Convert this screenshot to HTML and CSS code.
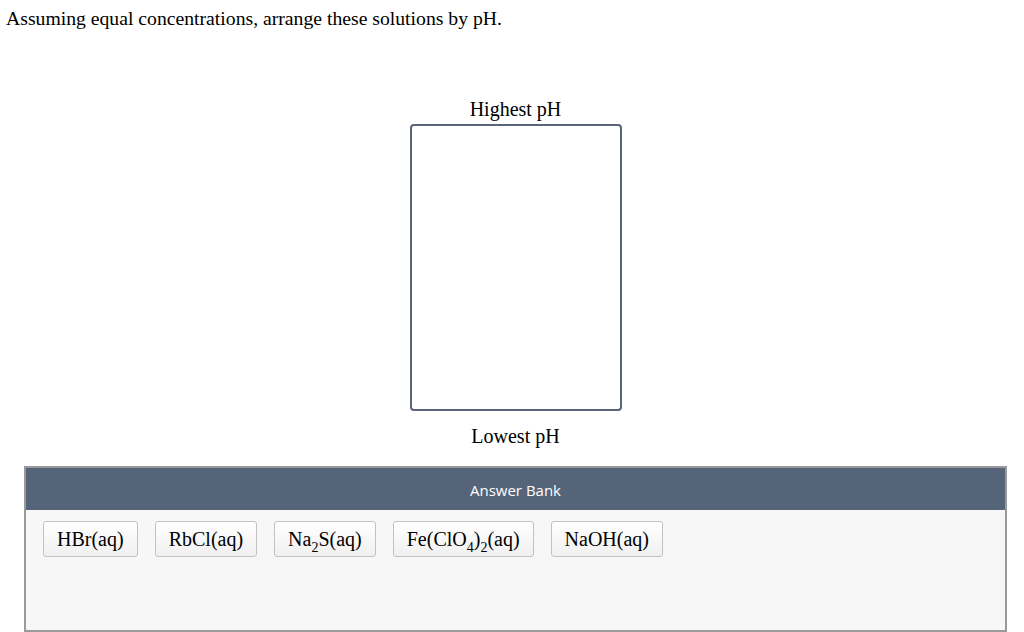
FILE: index.html
```html
<!DOCTYPE html>
<html lang="en">
<head>
    <meta charset="UTF-8">
    <title>Arrange by pH</title>
    <link rel="stylesheet" href="styles.css">
</head>
<body>

    <!-- Question -->
    <p class="question">Assuming equal concentrations, arrange these solutions by pH.</p>

    <div class="activity">
        <!-- Ranking target -->
        <div class="ranking">
            <div class="rank-label top">Highest pH</div>
            <div class="drop-zone"></div>
            <div class="rank-label bottom">Lowest pH</div>
        </div>

        <!-- Answer Bank -->
        <div class="bank">
            <div class="bank-header">Answer Bank</div>
            <div class="bank-body">
                <button class="chip">HBr(aq)</button>
                <button class="chip">RbCl(aq)</button>
                <button class="chip">Na<sub>2</sub>S(aq)</button>
                <button class="chip">Fe(ClO<sub>4</sub>)<sub>2</sub>(aq)</button>
                <button class="chip">NaOH(aq)</button>
            </div>
        </div>
    </div>

</body>
</html>
```
FILE: styles.css
```css
/* General Styles */
body {
    margin: 0;
    font-family: 'Liberation Serif', 'Times New Roman', serif;
    font-size: 20px;
    color: #000;
    background-color: #fff;
}

.question {
    margin: 0;
    padding: 7px 0 0 6px;
    line-height: 23px;
    font-size: 19.7px;
}

.activity {
    width: 983px;
    margin-left: 24px;
}

/* Ranking area */
.ranking {
    display: flex;
    flex-direction: column;
    align-items: center;
    margin-top: 68px;
}

.rank-label {
    line-height: 23px;
}

.rank-label.top {
    margin-bottom: 3px;
}

.rank-label.bottom {
    margin-top: 14px;
}

.drop-zone {
    width: 208px;
    height: 283px;
    border: 2px solid #5a6577;
    border-radius: 4px;
    background-color: #fff;
}

/* Answer Bank */
.bank {
    margin-top: 18px;
    border: 2px solid #9a9a9a;
    background-color: #f7f7f7;
}

.bank-header {
    height: 42px;
    line-height: 44px;
    background-color: #556479;
    color: #fff;
    text-align: center;
    font-family: 'Open Sans', 'Noto Sans', sans-serif;
    font-size: 15px;
}

.bank-body {
    display: flex;
    align-items: flex-start;
    gap: 17px;
    padding: 11px 17px 0;
    height: 109px;
}

.chip {
    height: 36px;
    padding: 0 13px;
    border: 1px solid #c2c2c2;
    border-radius: 3px;
    background: linear-gradient(#ffffff, #f0f0f0);
    font-family: 'Liberation Serif', 'Times New Roman', serif;
    font-size: 20px;
    color: #000;
    cursor: pointer;
}

.chip sub {
    font-size: 14px;
    line-height: 0;
    vertical-align: -6px;
}
```
